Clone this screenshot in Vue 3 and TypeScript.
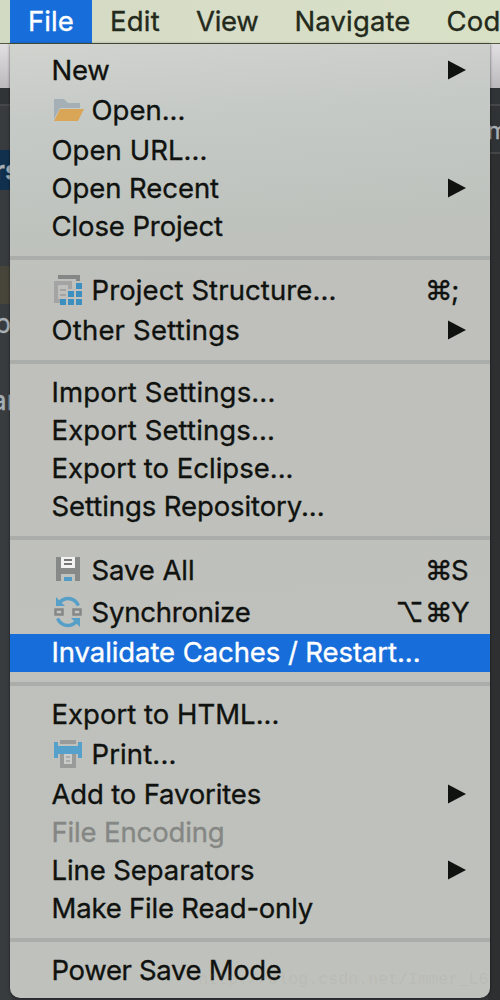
<script setup lang="ts">
import type { Directive } from 'vue'

type IconName = 'folder' | 'structure' | 'save' | 'sync' | 'print'

interface Item {
  label: string
  width: number
  icon?: IconName
  mods?: string[]
  letter?: string
  submenu?: boolean
  active?: boolean
  disabled?: boolean
}

const groups: Item[][] = [
  [
    { label: 'New', width: 58, submenu: true },
    { label: 'Open...', width: 94, icon: 'folder' },
    { label: 'Open URL...', width: 156 },
    { label: 'Open Recent', width: 167.5, submenu: true },
    { label: 'Close Project', width: 171.5 },
  ],
  [
    { label: 'Project Structure...', width: 245, icon: 'structure', mods: ['⌘'], letter: ';' },
    { label: 'Other Settings', width: 188.5, submenu: true },
  ],
  [
    { label: 'Import Settings...', width: 224 },
    { label: 'Export Settings...', width: 223.5 },
    { label: 'Export to Eclipse...', width: 242 },
    { label: 'Settings Repository...', width: 273 },
  ],
  [
    { label: 'Save All', width: 103, icon: 'save', mods: ['⌘'], letter: 'S' },
    { label: 'Synchronize', width: 159, icon: 'sync', mods: ['⌥', '⌘'], letter: 'Y' },
    { label: 'Invalidate Caches / Restart...', width: 369, active: true },
  ],
  [
    { label: 'Export to HTML...', width: 228 },
    { label: 'Print...', width: 85, icon: 'print' },
    { label: 'Add to Favorites', width: 209.5, submenu: true },
    { label: 'File Encoding', width: 173, disabled: true },
    { label: 'Line Separators', width: 203, submenu: true },
    { label: 'Make File Read-only', width: 261.5 },
  ],
  [{ label: 'Power Save Mode', width: 230 }],
]

const menus = [
  { label: 'File', width: 46 },
  { label: 'Edit', width: 50 },
  { label: 'View', width: 62.5 },
  { label: 'Navigate', width: 116 },
  { label: 'Code', width: 70.5 },
]

// Adjusts the tracking so that a label takes up its nominal width.
const vFit: Directive<HTMLElement, number> = {
  mounted(el, { value }) {
    const natural = el.getBoundingClientRect().width
    const count = (el.textContent ?? '').length
    el.style.letterSpacing = `${(value - natural) / count}px`
  },
}
</script>

<template>
  <div class="screen">
    <div class="side left">
      <div class="chrome"></div>
      <div class="toolbar"></div>
      <div class="tree selected"><span>rs</span></div>
      <div class="gap"></div>
      <div class="tree marked"></div>
      <div class="tree row-p"><span>p</span></div>
      <div class="tree row-ar"><span>ar</span></div>
    </div>
    <div class="side right">
      <div class="chrome"></div>
      <div class="toolbar"></div>
      <div class="crumb"><span>m</span></div>
    </div>

    <nav class="bar">
      <div v-for="(m, i) in menus" :key="m.label" class="bar-item" :class="{ open: i === 0 }">
        <span v-fit="m.width">{{ m.label }}</span>
      </div>
    </nav>

    <div class="menu">
      <div v-for="(group, g) in groups" :key="g" class="group">
        <div
          v-for="item in group"
          :key="item.label"
          class="item"
          :class="{ tall: item.icon, active: item.active, disabled: item.disabled }"
        >
          <svg v-if="item.icon === 'folder'" class="icon" viewBox="0 0 32 32">
            <path d="M2 5h10l4 4h12v5H8L2 25z" fill="#a4b0b5" />
            <path d="M8 15h24l-6 12H2z" fill="#d9a557" />
          </svg>
          <svg v-else-if="item.icon === 'structure'" class="icon" viewBox="0 0 32 32">
            <path d="M6 1h22v6h-4V5H6z" fill="#858686" />
            <path d="M2 7h18v8h-4v-4H6v14h2v4H2z" fill="#a3a4a3" />
            <path d="M8 15h6v2H8zM8 20h6v2H8z" fill="#a3a4a3" />
            <path d="M24 9h6v6h-6zM16 17h6v6h-6zM24 17h6v6h-6zM8 25h6v6H8zM16 25h6v6h-6zM24 25h6v6h-6z" fill="#3d8fc0" />
          </svg>
          <svg v-else-if="item.icon === 'save'" class="icon" viewBox="0 0 32 32">
            <path d="M4 3h24v24H4z" fill="#878888" />
            <path d="M9 3h14v11H9z" fill="#f1f2f1" />
            <path d="M12 5h8v2h-8zM12 9h8v2h-8z" fill="#777" />
            <path d="M9 20h14v7H9z" fill="#c0c2bd" />
            <path d="M12 23h8v4h-8z" fill="#509cc7" />
          </svg>
          <svg v-else-if="item.icon === 'sync'" class="icon" viewBox="0 0 32 32">
            <g fill="none" stroke="#569fc8" stroke-width="3.500">
              <path d="M7 7q4-4.500 9-4.500 7 0 10.500 7M25 25q-4 4.500-9 4.500-7 0-10.500-7" />
            </g>
            <path d="M4 1v9h9zM28 31v-9h-9z" fill="#569fc8" />
            <path d="M3.500 13.500h7v5h-7zM21.500 13.500h7v5h-7z" fill="#c4c5c2" stroke="#858686" stroke-width="2.500" />
          </svg>
          <svg v-else-if="item.icon === 'print'" class="icon" viewBox="0 0 32 32">
            <path d="M8 2h16v4H8z" fill="#999b9b" />
            <path d="M2 4h4v4h20V4h4v16h-4v-4H6v4H2z" fill="#56a1cb" />
            <path d="M8 16h16v14H8z" fill="#999b9b" />
            <path d="M12 16h8v10h-8z" fill="#cbccca" />
            <path d="M14 18h4v2h-4zM14 22h4v2h-4z" fill="#aaacab" />
          </svg>
          <span v-fit="item.width" class="label">{{ item.label }}</span>
          <span v-if="item.letter" class="shortcut">
            <span v-for="m in item.mods" :key="m" class="mod">{{ m }}</span>
            <span class="letter">{{ item.letter }}</span>
          </span>
          <svg v-if="item.submenu" class="arrow" viewBox="0 0 18 20">
            <path d="M0 0.500L18 10L0 19.500z" fill="currentColor" />
          </svg>
        </div>
      </div>
      <div class="watermark">http://blog.csdn.net/Immer_L6</div>
    </div>
  </div>
</template>

<style>
html,
body {
  margin: 0;
  overflow: hidden;
}
</style>

<style scoped>
.screen {
  position: relative;
  width: 500px;
  height: 1000px;
  overflow: hidden;
  background: #333538;
  font-family: Inter, 'Open Sans', sans-serif;
  font-size: 27.500px;
  -webkit-text-stroke: 0.350px currentColor;
  color: #10120f;
  white-space: nowrap;
}
.bar {
  display: flex;
  box-sizing: border-box;
  height: 44px;
  padding-left: 10px;
  background: linear-gradient(90deg, #d3dac4, #d7ddc7 45%, #d8e1c6);
  border-bottom: 1px solid #505941;
  color: #23291b;
}
.bar-item {
  flex: none;
  padding: 0 18px;
  line-height: 43px;
}
.bar-item.open {
  box-sizing: border-box;
  width: 82px;
  height: 43px;
  background: #176eda;
  color: #fff;
}
.menu {
  position: relative;
  box-sizing: border-box;
  width: 480px;
  height: 954px;
  margin-left: 10px;
  padding-top: 8px;
  border-radius: 0 0 10px 10px;
  background: linear-gradient(176deg, #d0d3ce 0, #c6cac6 80px, #bec3be 185px, #bfc0bb 250px, #bfc1bc 100%);
  box-shadow: 0 0 3px #0009;
}
.group + .group::before {
  content: '';
  display: block;
  height: 4px;
  padding: 0;
  border: solid transparent;
  border-width: 10px 0;
  background: #abadaa;
  background-clip: padding-box;
}
.item {
  display: flex;
  align-items: center;
  height: 38px;
  padding-left: 41px;
  line-height: 36px;
}
.item.tall {
  height: 42px;
}
.item.active {
  background: #176eda;
  color: #fff;
}
.item.disabled {
  color: #858784;
}
.icon {
  flex: none;
  width: 32px;
  height: 32px;
  margin: 0 7px 2px 1px;
}
.label {
  flex: none;
  margin: 0 0 2px 0.500px;
}
.arrow {
  width: 18px;
  height: 20px;
  margin: 0 24px 2px auto;
}
.shortcut {
  display: flex;
  margin: 0 0 2px auto;
}
.mod {
  width: 31px;
  text-align: center;
}
.mod:nth-last-child(2) {
  width: 26px;
}
.letter {
  width: 39px;
}
.watermark {
  position: absolute;
  left: 188px;
  bottom: 8px;
  width: 292px;
  overflow: hidden;
  font: 16.7px/20px 'Liberation Mono', monospace;
  -webkit-text-stroke: 0;
  color: #9c958822;
}
.side {
  position: absolute;
  top: 44px;
  width: 12px;
  height: 956px;
  color: #a8b0b6;
}
.left {
  left: 0;
  background: #393c3f;
}
.right {
  right: 0;
  background: #2d2f31;
}
.chrome {
  height: 44px;
  background: linear-gradient(#e2dfe3, #bbb9bc);
}
.toolbar {
  height: 16px;
  background: #313437;
  border-bottom: 2px solid #454749;
}
.left .toolbar {
  margin-bottom: 44px;
}
.tree {
  display: flex;
  justify-content: flex-end;
  align-items: center;
  height: 39px;
  line-height: 39px;
}
.selected {
  height: 40px;
  background: #10304d;
  font-weight: 600;
}
.selected span {
  margin-right: -8px;
}
.gap {
  height: 76px;
}
.marked {
  height: 38px;
  background: #47443a;
}
.row-p span {
  margin-right: 1px;
}
.row-ar {
  margin-top: 38px;
}
.row-ar span {
  margin-right: -5px;
}
.crumb {
  box-sizing: border-box;
  height: 48px;
  background: #303335;
  border-bottom: 2px solid #434547;
  line-height: 50px;
  font-size: 24px;
}
.crumb span {
  margin-left: -1px;
}
</style>
